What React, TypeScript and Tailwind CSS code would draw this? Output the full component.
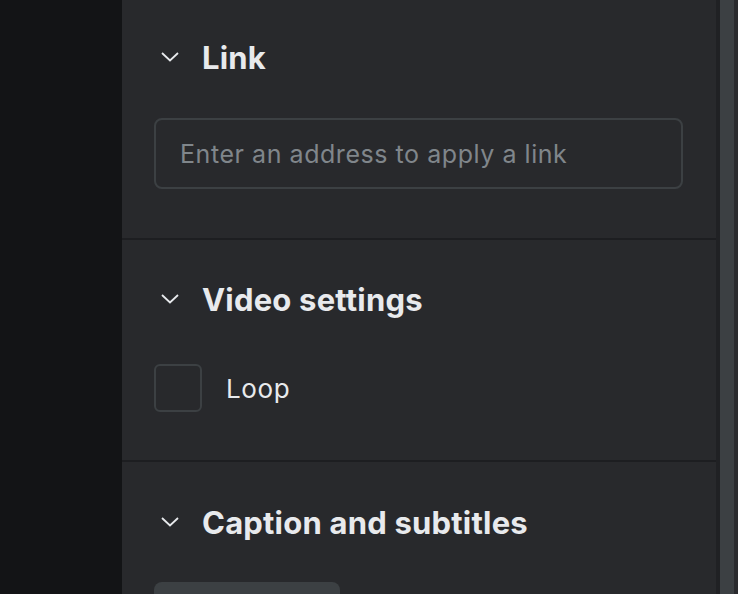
import React from 'react';

const Chevron: React.FC = () => (
  <svg width="20" height="12" viewBox="0 0 20 12" className="shrink-0 text-[#e8eaed]">
    <polyline points="2,2 10,9.5 18,2" fill="none" stroke="currentColor" strokeWidth="1.8" />
  </svg>
);

const SectionHeader: React.FC<{ title: string }> = ({ title }) => (
  <div className="flex items-center h-10 pl-[38px]">
    <Chevron />
    <h2 className="ml-[22px] text-[31px] font-bold text-[#e8eaed] tracking-[0.2px] leading-none">{title}</h2>
  </div>
);

const App: React.FC = () => {
  return (
    <div
      className="flex w-[738px] h-[594px] overflow-hidden bg-[#28292c]"
      style={{ fontFamily: 'Inter, "Open Sans", sans-serif' }}
    >
      {/* Left rail */}
      <div className="w-[122px] shrink-0 bg-[#131416]" />

      {/* Settings panel */}
      <div className="flex-1 flex flex-col bg-[#28292c]">
        {/* Link */}
        <section className="pt-[37px] pb-[49px] border-b-2 border-[#1d1e21]">
          <SectionHeader title="Link" />
          <div className="mt-[41px] pl-[32px] pr-[33px]">
            <input
              type="text"
              placeholder="Enter an address to apply a link"
              className="w-full h-[71px] rounded-lg border-2 border-[#3c4043] bg-transparent px-[24px] text-[25px] tracking-[0.55px] text-[#e8eaed] placeholder:text-[#80868b] outline-none"
            />
          </div>
        </section>

        {/* Video settings */}
        <section className="pt-[39px] pb-[48px] border-b-2 border-[#1d1e21]">
          <SectionHeader title="Video settings" />
          <label className="mt-[45px] pl-[32px] flex items-center gap-[24px]">
            <span className="w-[48px] h-[48px] rounded-md border-2 border-[#3c4043] shrink-0" />
            <span className="text-[26px] tracking-[0.6px] text-[#e8eaed]">Loop</span>
          </label>
        </section>

        {/* Caption and subtitles */}
        <section className="pt-[40px]">
          <SectionHeader title="Caption and subtitles" />
          <div className="mt-[40px] pl-[32px]">
            <button className="w-[186px] h-[48px] rounded-lg bg-[#3c4043]" />
          </div>
        </section>
      </div>

      {/* Scrollbar */}
      <div className="w-[4px] shrink-0 bg-[#202124]" />
      <div className="w-[14px] shrink-0 bg-[#3c4043]" />
      <div className="w-[4px] shrink-0 bg-[#2a2b2e]" />
    </div>
  );
};

export default App;
